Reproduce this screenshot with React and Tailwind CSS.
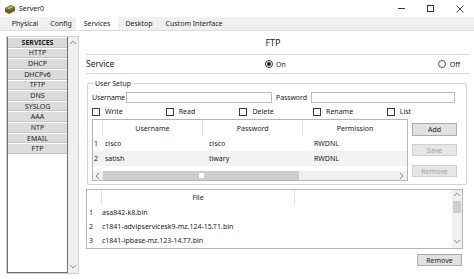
import React from "react";

const services = ["HTTP", "DHCP", "DHCPv6", "TFTP", "DNS", "SYSLOG", "AAA", "NTP", "EMAIL", "FTP"];
const tabs = [
  { label: "Physical", w: "w-[42px]" },
  { label: "Config", w: "w-[30px]" },
  { label: "Services", w: "w-[42px]", active: true },
  { label: "Desktop", w: "w-[42px]" },
  { label: "Custom Interface", w: "w-[68px]" },
];
const users = [
  { id: 1, name: "cisco", pass: "cisco", perm: "RWDNL" },
  { id: 2, name: "satish", pass: "tiwary", perm: "RWDNL" },
];
const files = ["asa842-k8.bin", "c1841-advipservicesk9-mz.124-15.T1.bin", "c1841-ipbase-mz.123-14.T7.bin"];
const perms = ["Write", "Read", "Delete", "Rename", "List"];

const Chevron = ({ dir }) => {
  const d = {
    up: "M1 5 L4 2 L7 5",
    down: "M1 2 L4 5 L7 2",
    left: "M5 1 L2 4 L5 7",
    right: "M2 1 L5 4 L2 7",
  }[dir];
  return (
    <svg width="8" height="8" viewBox="0 0 8 8">
      <path d={d} fill="none" stroke="#8a8a8a" strokeWidth="1" />
    </svg>
  );
};

const Checkbox = ({ label }) => (
  <div className="w-[73.7px] flex items-center">
    <span className="w-[8px] h-[8px] border border-[#3a3a3a] bg-white" />
    <span className="ml-[5px]">{label}</span>
  </div>
);

const App = () => {
  return (
    <div className="w-[474px] h-[279px] bg-white flex flex-col overflow-hidden font-['Noto_Sans',sans-serif] text-[7px] text-[#1c1c1c] leading-none">
      {/* title bar */}
      <div className="h-[17px] flex items-center pl-[4px]">
        <svg width="12" height="12" viewBox="0 0 12 12">
          <polygon points="1,5 7,2 11,4 11,8 5,11 1,9" fill="#7a5a2a" />
          <polygon points="1,5 7,2 11,4 5,7" fill="#6f9a3a" />
          <polygon points="3,5 7,3 9,4 5,6" fill="#a8c868" />
        </svg>
        <span className="ml-[3px]">Server0</span>
        <div className="ml-auto flex h-full">
          <div className="w-[29px] flex items-center justify-center">
            <span className="w-[7px] h-px bg-[#333]" />
          </div>
          <div className="w-[29px] flex items-center justify-center">
            <span className="w-[7px] h-[7px] border border-[#333]" />
          </div>
          <div className="w-[29px] flex items-center justify-center">
            <svg width="8" height="8" viewBox="0 0 8 8">
              <path d="M0.5 0.5 L7.5 7.5 M7.5 0.5 L0.5 7.5" stroke="#333" strokeWidth="0.9" />
            </svg>
          </div>
        </div>
      </div>

      {/* tabs */}
      <div className="h-[14px] bg-[#f0f0f0] border-b border-[#dcdcdc] flex items-end pl-[4px]">
        {tabs.map((t) => (
          <div
            key={t.label}
            className={`${t.w} h-[13px] flex items-center justify-center ${t.active ? "bg-white" : ""}`}
          >
            {t.label}
          </div>
        ))}
      </div>

      {/* main */}
      <div className="flex-1 flex min-h-0">
        {/* services list */}
        <div className="w-[82px] pl-[6px] pt-[5px] pb-[5px] flex">
          <div className="w-[73px] flex border border-[#cfcfcf]">
            <div className="w-[61px] border-x border-b border-[#6f6f6f] flex flex-col bg-white">
              <div className="h-[10.65px] bg-[#d9d9d9] border-b border-[#c4c4c4] border-t border-t-white flex items-center justify-center font-bold">
                SERVICES
              </div>
              {services.map((s) => (
                <div
                  key={s}
                  className="h-[10.65px] bg-[#dcdcdc] border-b border-[#c4c4c4] border-t border-t-white flex items-center justify-center"
                >
                  {s}
                </div>
              ))}
            </div>
            <div className="flex-1 bg-[#f0f0f0] flex flex-col justify-between items-center py-[2px]">
              <Chevron dir="up" />
              <Chevron dir="down" />
            </div>
          </div>
        </div>

        {/* right panel */}
        <div className="flex-1 pl-[4px] pr-[4px] flex flex-col">
          <div className="h-[24px] flex items-center justify-center pr-[10px] border-b border-[#d8d8d8] text-[9px]">
            FTP
          </div>
          <div className="h-[19px] flex items-center border-b border-[#d8d8d8] pr-[10px]">
            <span className="w-[179px] text-[8.5px]">Service</span>
            <span className="w-[8px] h-[8px] rounded-full border border-[#333] flex items-center justify-center">
              <span className="w-[4px] h-[4px] rounded-full bg-[#222]" />
            </span>
            <span className="ml-[3px]">On</span>
            <span className="ml-auto w-[8px] h-[8px] rounded-full border border-[#555]" />
            <span className="ml-[4px]">Off</span>
          </div>

          {/* user setup */}
          <fieldset className="mt-[4px] ml-[1px] mr-[3px] border border-[#d4d4d4] rounded-[2px] px-[4px] pb-[3px]">
            <legend className="ml-[2px] px-[1px] h-[10px] flex items-center">User Setup</legend>
            <div className="mt-[4px] h-[11px] flex items-center">
              <span className="w-[34px] shrink-0 whitespace-nowrap tracking-[-0.15px]">Username</span>
              <span className="w-[146px] shrink-0 h-[11px] border border-[#bdbdbd]" />
              <span className="ml-[4px] w-[35px] shrink-0 whitespace-nowrap tracking-[-0.1px]">Password</span>
              <span className="w-[144px] shrink-0 h-[11px] border border-[#bdbdbd]" />
            </div>
            <div className="mt-[4px] h-[9px] flex items-center">
              {perms.map((p) => (
                <Checkbox key={p} label={p} />
              ))}
            </div>
            <div className="mt-[3px] flex">
              <div className="w-[316px] h-[62px] border border-[#b4b4b4] flex flex-col overflow-hidden">
                <div className="h-[16px] flex shrink-0">
                  <span className="w-[10px] border-r border-[#e3e3e3]" />
                  <span className="w-[106px] border-r border-[#e3e3e3] flex items-center justify-center">Username</span>
                  <span className="w-[105px] border-r border-[#e3e3e3] flex items-center justify-center">Password</span>
                  <span className="w-[104px] flex items-center justify-center shrink-0">Permission</span>
                </div>
                {users.map((u, i) => (
                  <div key={u.id} className={`h-[15px] flex items-center shrink-0 ${i % 2 ? "bg-[#f2f2f2]" : ""}`}>
                    <span className="w-[10px] pl-[1px]">{u.id}</span>
                    <span className="w-[106px] pl-[2px]">{u.name}</span>
                    <span className="w-[105px]">{u.pass}</span>
                    <span>{u.perm}</span>
                  </div>
                ))}
                <div className="flex-1" />
                <div className="h-[9px] bg-[#f0f0f0] flex items-center shrink-0">
                  <span className="w-[10px] flex justify-center">
                    <Chevron dir="left" />
                  </span>
                  <span className="w-[196px] h-[9px] bg-[#cdcdcd] flex items-center justify-center">
                    <span className="w-[5px] h-[5px] bg-white" />
                  </span>
                  <span className="ml-auto w-[10px] flex justify-center">
                    <Chevron dir="right" />
                  </span>
                </div>
              </div>
              <div className="ml-[4px] w-[45px] flex flex-col pt-[4px]">
                <div className="h-[13px] bg-[#e1e1e1] border border-[#adadad] flex items-center justify-center">Add</div>
                <div className="mt-[8px] h-[12px] bg-[#e6e6e6] border border-[#d0d0d0] text-[#a3a3a3] flex items-center justify-center">
                  Save
                </div>
                <div className="mt-[9px] h-[12px] bg-[#e6e6e6] border border-[#d0d0d0] text-[#a3a3a3] flex items-center justify-center">
                  Remove
                </div>
              </div>
            </div>
          </fieldset>

          {/* files */}
          <div className="mt-[4px] w-[377px] h-[60px] border border-[#b4b4b4] flex">
            <div className="flex-1 flex flex-col">
              <div className="h-[16px] flex">
                <span className="w-[15px] border-r border-[#e3e3e3]" />
                <span className="w-[193px] border-r border-[#e3e3e3] flex items-center justify-center">File</span>
              </div>
              {files.map((f, i) => (
                <div key={f} className="h-[15px] flex items-center">
                  <span className="w-[15px] pl-[2px]">{i + 1}</span>
                  <span>{f}</span>
                </div>
              ))}
            </div>
            <div className="w-[10px] bg-[#f0f0f0] flex flex-col items-center pt-[1px] pb-[2px]">
              <Chevron dir="up" />
              <span className="mt-[2px] w-[8px] h-[12px] bg-[#cdcdcd]" />
              <span className="mt-auto">
                <Chevron dir="down" />
              </span>
            </div>
          </div>
          <div className="mt-[5px] mr-[8px] self-end w-[45px] h-[12px] bg-[#e1e1e1] border border-[#adadad] flex items-center justify-center">
            Remove
          </div>
        </div>
      </div>
    </div>
  );
};

export default App;
